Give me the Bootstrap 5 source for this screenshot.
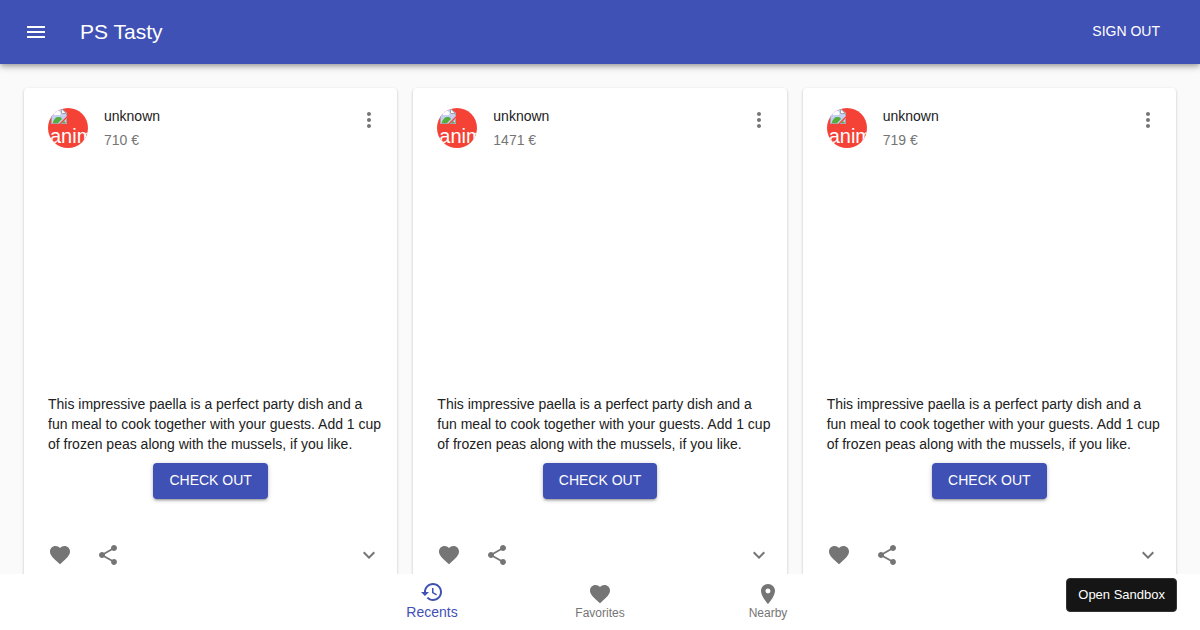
<!DOCTYPE html>
<html lang="en">
<head>
<meta charset="utf-8">
<meta name="viewport" content="width=device-width, initial-scale=1">
<title>PS Tasty</title>
<link href="https://cdn.jsdelivr.net/npm/bootstrap@5.3.0/dist/css/bootstrap.min.css" rel="stylesheet">
<style>
  :root { --indigo: #3f51b5; --muted: #757575; --ink: #212121; }
  body { background: #fafafa; color: var(--ink); font-family: "Liberation Sans", Arial, sans-serif; font-size: 14px; line-height: 20px; padding-bottom: 40px; }
  svg { fill: currentColor; display: block; }
  .appbar { height: 64px; background: var(--indigo); color: #fff; box-shadow: 0 2px 4px -1px rgba(0,0,0,.2), 0 4px 5px rgba(0,0,0,.14), 0 1px 10px rgba(0,0,0,.12); }
  .brand-title { font-size: 21px; line-height: 24px; font-weight: 400; margin-left: 20px; }
  .icon-button { width: 48px; height: 48px; padding: 12px; border: 0; background: none; color: inherit; }
  .text-button { height: 36px; padding: 0 16px 2px; border: 0; border-radius: 4px; background: none; color: #fff; text-transform: uppercase; }
  .raised { background: var(--indigo); box-shadow: 0 1px 5px rgba(0,0,0,.2), 0 2px 2px rgba(0,0,0,.14), 0 3px 1px -2px rgba(0,0,0,.12); }
  .dish { border: 0; border-radius: 4px; color: var(--ink); box-shadow: 0 1px 3px rgba(0,0,0,.2), 0 1px 1px rgba(0,0,0,.14), 0 2px 1px -1px rgba(0,0,0,.12); }
  .dish-head { padding: 16px 24px; line-height: 24px; }
  .dish-head .icon-button { margin: -8px -20px 0 0; }
  .avatar { width: 40px; height: 40px; background: #f44336; color: #fff; font-size: 20px; line-height: 24px; padding-left: 2px; overflow: hidden; white-space: nowrap; }
  .dish-media { aspect-ratio: 16 / 9; }
  .dish-text { padding: 16px 14px 9px 24px; }
  .dish-actions { padding: 0 4px 8px 12px; margin-top: 32px; }
  .soft { color: var(--muted); }
  .bottom-nav { height: 56px; background: #fff; }
  .bottom-nav a { width: 168px; padding-top: 8px; font-size: 12px; line-height: 14px; color: var(--muted); }
  .bottom-nav a.active { padding-top: 6px; font-size: 14px; line-height: 16px; color: var(--indigo); }
  .sandbox { right: 23px; bottom: 18px; z-index: 1040; height: 34px; padding: 0 11px; font-size: 13px; color: #fff; background: #151515; border: 1px solid #343434; border-radius: 4px; }
</style>
</head>
<body>
<svg width="0" height="0" class="position-absolute" aria-hidden="true">
  <defs>
    <symbol id="heart" viewBox="0 0 24 24"><path d="M12 21.35l-1.45-1.32C5.4 15.36 2 12.28 2 8.5 2 5.42 4.42 3 7.5 3c1.74 0 3.41.81 4.5 2.09C13.09 3.81 14.76 3 16.5 3 19.58 3 22 5.42 22 8.5c0 3.78-3.4 6.86-8.55 11.54L12 21.35z"/></symbol>
    <symbol id="share" viewBox="0 0 24 24"><path d="M18 16.08c-.76 0-1.44.3-1.96.77L8.91 12.7c.05-.23.09-.46.09-.7s-.04-.47-.09-.7l7.05-4.11c.54.5 1.25.81 2.04.81 1.66 0 3-1.34 3-3s-1.34-3-3-3-3 1.34-3 3c0 .24.04.47.09.7L8.04 9.81C7.5 9.31 6.79 9 6 9c-1.66 0-3 1.34-3 3s1.34 3 3 3c.79 0 1.5-.31 2.04-.81l7.12 4.16c-.05.21-.08.43-.08.65 0 1.61 1.31 2.92 2.92 2.92 1.61 0 2.92-1.31 2.92-2.92s-1.31-2.92-2.92-2.92z"/></symbol>
    <symbol id="expand" viewBox="0 0 24 24"><path d="M16.590 8.590L12 13.170 7.410 8.590 6 10l6 6 6-6z"/></symbol>
    <symbol id="more" viewBox="0 0 24 24"><path d="M12 8c1.1 0 2-.9 2-2s-.9-2-2-2-2 .9-2 2 .9 2 2 2zm0 2c-1.1 0-2 .9-2 2s.9 2 2 2 2-.9 2-2-.9-2-2-2zm0 6c-1.1 0-2 .9-2 2s.9 2 2 2 2-.9 2-2-.9-2-2-2z"/></symbol>
    <symbol id="broken" viewBox="0 0 17 16">
      <path fill="#c5cff2" d="M1 0h10l6 5v3L9 16H1z"/>
      <path fill="#fff" d="M4 7a2 2 0 0 1 1-3 3 3 0 0 1 5 0 2 2 0 0 1 0 3z"/>
      <path fill="#55ad3c" d="M3 14c1-3 3-5 5-5 2 0 3 0 4 2l-4 4H3z"/>
      <path fill="#c5cff2" d="M17 10v6h-6z"/><path fill="#55ad3c" d="M14 13l2 2h-4z"/>
      <path fill="#fff" d="M11 1v5h5z"/>
      <path fill="none" stroke="#a3a3a8" d="M9 15.500H1.500V.500h10l5 5v2M11.500.500v5h5M16.500 10v5.500H11"/>
    </symbol>
  </defs>
</svg>

<header class="appbar d-flex align-items-center justify-content-between sticky-top ps-2 pe-4">
  <div class="d-flex align-items-center ps-1">
    <button class="icon-button" type="button" aria-label="Menu"><svg width="24" height="24" viewBox="0 0 24 24"><path d="M3 18h18v-2H3v2zm0-5h18v-2H3v2zm0-7v2h18V6H3z"/></svg></button>
    <h1 class="brand-title mb-0">PS Tasty</h1>
  </div>
  <button class="text-button" type="button">Sign out</button>
</header>

<main class="container-fluid px-4 pt-4">
  <div class="row gx-3 gy-3 mt-0">
    <div class="col-12 col-sm-4 mt-0">
      <article class="card dish">
        <div class="dish-head d-flex align-items-start">
          <div class="avatar rounded-circle align-self-center me-3"><svg width="17" height="16"><use href="#broken"/></svg>anim</div>
          <div class="flex-grow-1"><div>unknown</div><div class="soft">710 €</div></div>
          <button class="icon-button soft" type="button" aria-label="More"><svg width="24" height="24"><use href="#more"/></svg></button>
        </div>
        <div class="dish-media"></div>
        <p class="dish-text mb-0">This impressive paella is a perfect party dish and a fun meal to cook together with your guests. Add 1 cup of frozen peas along with the mussels, if you like.</p>
        <div class="text-center"><button class="text-button raised" type="button">Check out</button></div>
        <div class="dish-actions d-flex soft">
          <button class="icon-button" type="button" aria-label="Add to favorites"><svg width="24" height="24"><use href="#heart"/></svg></button>
          <button class="icon-button" type="button" aria-label="Share"><svg width="24" height="24"><use href="#share"/></svg></button>
          <button class="icon-button ms-auto" type="button" aria-label="Show more"><svg width="24" height="24"><use href="#expand"/></svg></button>
        </div>
      </article>
    </div>
    <div class="col-12 col-sm-4 mt-0">
      <article class="card dish">
        <div class="dish-head d-flex align-items-start">
          <div class="avatar rounded-circle align-self-center me-3"><svg width="17" height="16"><use href="#broken"/></svg>anim</div>
          <div class="flex-grow-1"><div>unknown</div><div class="soft">1471 €</div></div>
          <button class="icon-button soft" type="button" aria-label="More"><svg width="24" height="24"><use href="#more"/></svg></button>
        </div>
        <div class="dish-media"></div>
        <p class="dish-text mb-0">This impressive paella is a perfect party dish and a fun meal to cook together with your guests. Add 1 cup of frozen peas along with the mussels, if you like.</p>
        <div class="text-center"><button class="text-button raised" type="button">Check out</button></div>
        <div class="dish-actions d-flex soft">
          <button class="icon-button" type="button" aria-label="Add to favorites"><svg width="24" height="24"><use href="#heart"/></svg></button>
          <button class="icon-button" type="button" aria-label="Share"><svg width="24" height="24"><use href="#share"/></svg></button>
          <button class="icon-button ms-auto" type="button" aria-label="Show more"><svg width="24" height="24"><use href="#expand"/></svg></button>
        </div>
      </article>
    </div>
    <div class="col-12 col-sm-4 mt-0">
      <article class="card dish">
        <div class="dish-head d-flex align-items-start">
          <div class="avatar rounded-circle align-self-center me-3"><svg width="17" height="16"><use href="#broken"/></svg>anim</div>
          <div class="flex-grow-1"><div>unknown</div><div class="soft">719 €</div></div>
          <button class="icon-button soft" type="button" aria-label="More"><svg width="24" height="24"><use href="#more"/></svg></button>
        </div>
        <div class="dish-media"></div>
        <p class="dish-text mb-0">This impressive paella is a perfect party dish and a fun meal to cook together with your guests. Add 1 cup of frozen peas along with the mussels, if you like.</p>
        <div class="text-center"><button class="text-button raised" type="button">Check out</button></div>
        <div class="dish-actions d-flex soft">
          <button class="icon-button" type="button" aria-label="Add to favorites"><svg width="24" height="24"><use href="#heart"/></svg></button>
          <button class="icon-button" type="button" aria-label="Share"><svg width="24" height="24"><use href="#share"/></svg></button>
          <button class="icon-button ms-auto" type="button" aria-label="Show more"><svg width="24" height="24"><use href="#expand"/></svg></button>
        </div>
      </article>
    </div>
  </div>
</main>

<nav class="bottom-nav fixed-bottom d-flex justify-content-center" aria-label="Sections">
  <a href="#recents" class="active d-flex flex-column align-items-center text-decoration-none"><svg width="24" height="24" viewBox="0 0 24 24"><path d="M13 3c-4.970 0-9 4.030-9 9H1l3.890 3.890.07.140L9 12H6c0-3.870 3.130-7 7-7s7 3.130 7 7-3.130 7-7 7c-1.930 0-3.680-.790-4.940-2.060l-1.420 1.420C8.270 19.990 10.510 21 13 21c4.970 0 9-4.030 9-9s-4.030-9-9-9zm-1 5v5l4.280 2.540.720-1.210-3.500-2.080V8H12z"/></svg>Recents</a>
  <a href="#favorites" class="d-flex flex-column align-items-center text-decoration-none"><svg width="24" height="24"><use href="#heart"/></svg>Favorites</a>
  <a href="#nearby" class="d-flex flex-column align-items-center text-decoration-none"><svg width="24" height="24" viewBox="0 0 24 24"><path d="M12 2C8.130 2 5 5.130 5 9c0 5.250 7 13 7 13s7-7.750 7-13c0-3.870-3.130-7-7-7zm0 9.500a2.500 2.500 0 0 1 0-5 2.500 2.500 0 0 1 0 5z"/></svg>Nearby</a>
</nav>
<button class="sandbox position-fixed" type="button">Open Sandbox</button>
<script src="https://cdn.jsdelivr.net/npm/bootstrap@5.3.0/dist/js/bootstrap.bundle.min.js"></script>
</body>
</html>
